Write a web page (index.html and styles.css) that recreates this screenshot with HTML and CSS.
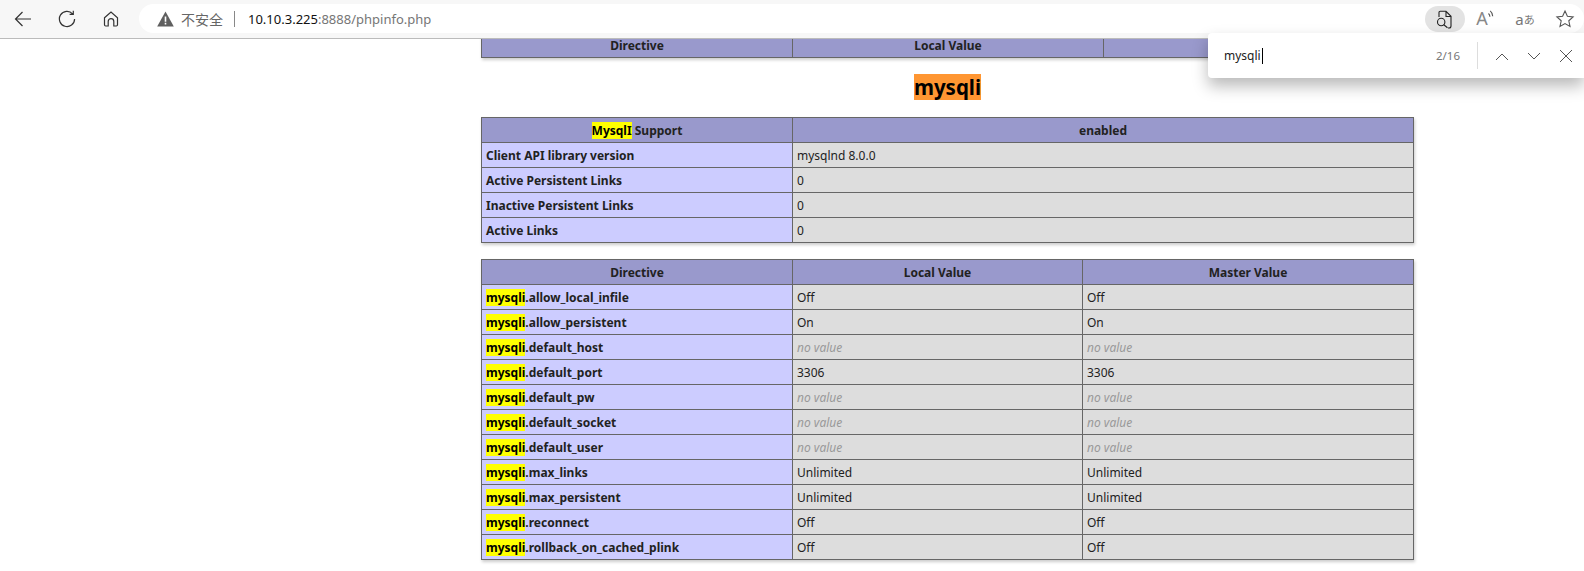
FILE: index.html
```html
<!DOCTYPE html>
<html lang="en">
<head>
    <meta charset="UTF-8">
    <title>phpinfo()</title>
    <link rel="stylesheet" href="styles.css">
</head>
<body>
    <div class="toolbar">
        <button class="nav-btn">
            <svg width="18" height="18" viewBox="0 0 18 18"><path d="M17 9H1.200M8.500 2 1.500 9l7 7"/></svg>
        </button>
        <button class="nav-btn">
            <svg width="18" height="18" viewBox="0 0 18 18"><path d="M14.600 3.800A7.600 7.600 0 1 0 16.600 9M15.300 .8v3.600h-3.700"/></svg>
        </button>
        <button class="nav-btn">
            <svg width="18" height="18" viewBox="0 0 18 18"><path d="M2.500 7.800 9 2l6.500 5.800v7a1.200 1.200 0 0 1-1.200 1.200h-2.500v-4.500a2.800 2.800 0 0 0-5.600 0V16H3.700a1.200 1.200 0 0 1-1.200-1.200z"/></svg>
        </button>
        <div class="address">
            <svg class="warn-icon" width="17" height="16" viewBox="0 0 17 16"><path d="M8.500 .5 16.800 15.500H.2z" fill="#5f5f5f"/><path d="M8.500 5.500v5.200M8.500 11.800v1.700" stroke="#fff" stroke-width="1.600"/></svg>
            <span class="warn-text">不安全</span>
            <span class="sep"></span>
            <span class="url"><span class="host">10.10.3.225</span>:8888/phpinfo.php</span>
            <div class="addr-icons">
                <span class="addr-icon active">
                    <svg width="20" height="20" viewBox="0 0 20 20"><path d="M4 8V3.500a1.200 1.200 0 0 1 1.200-1.200H11l5 5V17a2 2 0 0 1-2 2h-1M11 2.500v5h5"/><circle cx="6.200" cy="13" r="3.700"/><path d="m8.800 15.700 3.700 3"/></svg>
                </span>
                <span class="addr-icon read-icon">A<svg width="6" height="9" viewBox="0 0 6 9"><path d="M.5 3.500c1 .9 1.400 1.900 1.400 3.300M2.200.8c1.700 1.400 2.500 3.200 2.500 5.400"/></svg></span>
                <span class="addr-icon trans-icon"><span class="latin">a</span><span class="kana">あ</span></span>
                <span class="addr-icon">
                    <svg width="20" height="20" viewBox="0 0 20 20"><path d="m10 2 2.400 5.300 5.700.6-4.300 3.900 1.200 5.700-5-2.900-5 2.900 1.200-5.700L1.900 7.900l5.700-.6z"/></svg>
                </span>
            </div>
        </div>
    </div>

    <div class="find-bar">
        <span class="find-input">mysqli</span>
        <span class="find-count">2/16</span>
        <span class="find-sep"></span>
        <svg class="find-btn" width="12" height="12" viewBox="0 0 12 12"><path d="m0 10 6-6 6 6"/></svg>
        <svg class="find-btn" width="12" height="12" viewBox="0 0 12 12"><path d="m0 3 6 6 6-6"/></svg>
        <svg class="find-btn" width="12" height="12" viewBox="0 0 12 12"><path d="m0 0 12 12M12 0 0 12"/></svg>
    </div>

    <div class="page">
        <table class="clipped">
            <tr class="h"><th class="c1">Directive</th><th class="c2">Local Value</th><th></th></tr>
        </table>

        <h2><span class="current">mysqli</span></h2>

        <table>
            <tr class="h"><th class="c1"><mark>MysqlI</mark> Support</th><th>enabled</th></tr>
            <tr><td class="e">Client API library version</td><td class="v">mysqlnd 8.0.0</td></tr>
            <tr><td class="e">Active Persistent Links</td><td class="v">0</td></tr>
            <tr><td class="e">Inactive Persistent Links</td><td class="v">0</td></tr>
            <tr><td class="e">Active Links</td><td class="v">0</td></tr>
        </table>

        <table>
            <tr class="h"><th class="c1">Directive</th><th class="c2b">Local Value</th><th>Master Value</th></tr>
            <tr><td class="e"><mark>mysqli</mark>.allow_local_infile</td><td class="v">Off</td><td class="v">Off</td></tr>
            <tr><td class="e"><mark>mysqli</mark>.allow_persistent</td><td class="v">On</td><td class="v">On</td></tr>
            <tr><td class="e"><mark>mysqli</mark>.default_host</td><td class="v"><i>no value</i></td><td class="v"><i>no value</i></td></tr>
            <tr><td class="e"><mark>mysqli</mark>.default_port</td><td class="v">3306</td><td class="v">3306</td></tr>
            <tr><td class="e"><mark>mysqli</mark>.default_pw</td><td class="v"><i>no value</i></td><td class="v"><i>no value</i></td></tr>
            <tr><td class="e"><mark>mysqli</mark>.default_socket</td><td class="v"><i>no value</i></td><td class="v"><i>no value</i></td></tr>
            <tr><td class="e"><mark>mysqli</mark>.default_user</td><td class="v"><i>no value</i></td><td class="v"><i>no value</i></td></tr>
            <tr><td class="e"><mark>mysqli</mark>.max_links</td><td class="v">Unlimited</td><td class="v">Unlimited</td></tr>
            <tr><td class="e"><mark>mysqli</mark>.max_persistent</td><td class="v">Unlimited</td><td class="v">Unlimited</td></tr>
            <tr><td class="e"><mark>mysqli</mark>.reconnect</td><td class="v">Off</td><td class="v">Off</td></tr>
            <tr><td class="e"><mark>mysqli</mark>.rollback_on_cached_plink</td><td class="v">Off</td><td class="v">Off</td></tr>
        </table>
    </div>
</body>
</html>
```
FILE: styles.css
```css
html, body {
    margin: 0;
    height: 571px;
    overflow: hidden;
    background: #fff;
    font-family: "Noto Sans", "Noto Sans CJK SC", sans-serif;
}
.toolbar {
    height: 37px;
    display: flex;
    align-items: center;
    padding: 0 0 1px 1px;
    background: #f7f7f7;
    border-bottom: 1px solid #bbb;
    position: relative;
    z-index: 2;
}
.nav-btn {
    width: 44px;
    height: 29px;
    padding: 0;
    border: none;
    background: none;
    display: flex;
    align-items: center;
    justify-content: center;
}
.nav-btn svg {
    fill: none;
    stroke: #333;
    stroke-width: 1.2;
}
.address {
    flex: 1;
    height: 29px;
    margin-left: 6px;
    background: #fff;
    border-radius: 15px;
    display: flex;
    align-items: center;
    padding-left: 18px;
    font-size: 14px;
}
.warn-text {
    color: #666;
    margin-left: 7px;
}
.sep {
    width: 1px;
    height: 16px;
    background: #888;
    margin: 0 13px 0 11px;
}
.url {
    color: #767676;
    font-size: 13px;
}
.host {
    color: #111;
}
.addr-icons {
    align-self: flex-start;
    margin: 2px -1px 0 auto;
    display: flex;
    align-items: center;
}
.addr-icon {
    width: 40px;
    height: 26px;
    display: flex;
    align-items: center;
    justify-content: center;
    color: #777;
}
.addr-icon.active {
    background: #e3e3e3;
    border-radius: 13px;
}
.addr-icon svg {
    fill: none;
    stroke: #555;
    stroke-width: 1.1;
}
.addr-icon.active svg {
    stroke: #222;
}
.read-icon {
    font-size: 18px;
    align-items: flex-start;
    line-height: 25px;
    color: #888;
}
.read-icon svg {
    margin-top: 4px;
}
.trans-icon .latin {
    font-size: 15px;
}
.trans-icon .kana {
    font-size: 11px;
}
.find-bar {
    position: absolute;
    top: 33px;
    left: 1208px;
    width: 376px;
    height: 45px;
    background: #fff;
    border-radius: 4px 0 0 4px;
    box-shadow: 0 8px 16px rgba(0,0,0,0.28);
    z-index: 3;
    display: flex;
    align-items: center;
    font-size: 12px;
}
.find-input {
    margin-left: 16px;
    color: #222;
    border-right: 1px solid #000;
    line-height: 16px;
    padding-right: 1px;
}
.find-count {
    margin-left: auto;
    color: #777;
    font-size: 11.5px;
}
.find-sep {
    width: 1px;
    height: 27px;
    background: #ddd;
    margin: 0 18px 0 17px;
}
.find-btn {
    fill: none;
    stroke: #555;
    stroke-width: 1;
    margin-right: 20px;
}
.find-btn:last-child {
    margin-right: 12px;
}
.page {
    width: 933px;
    margin-left: 481px;
}
table {
    width: 933px;
    table-layout: fixed;
    border-collapse: collapse;
    box-shadow: 1px 2px 3px #ccc;
    font-size: 12px;
    color: #222;
    margin-bottom: 16px;
}
.clipped {
    margin-top: -7px;
    margin-bottom: 0;
}
th, td {
    border: 1px solid #666;
    height: 25px;
    padding: 0 4px;
    box-sizing: border-box;
    text-align: left;
}
.h th {
    background: #99c;
    text-align: center;
    font-weight: bold;
}
.c1 {
    width: 311px;
}
.c2 {
    width: 311px;
}
.c2b {
    width: 290px;
}
.e {
    background: #ccf;
    font-weight: bold;
}
.v {
    background: #ddd;
}
.v i {
    color: #999;
}
mark {
    background: #ff0;
    color: #000;
}
h2 {
    margin: 16px 0 17px;
    text-align: center;
    font-size: 20.5px;
    line-height: 26px;
    color: #000;
}
.current {
    display: inline-block;
    background: #ff9632;
}
```
